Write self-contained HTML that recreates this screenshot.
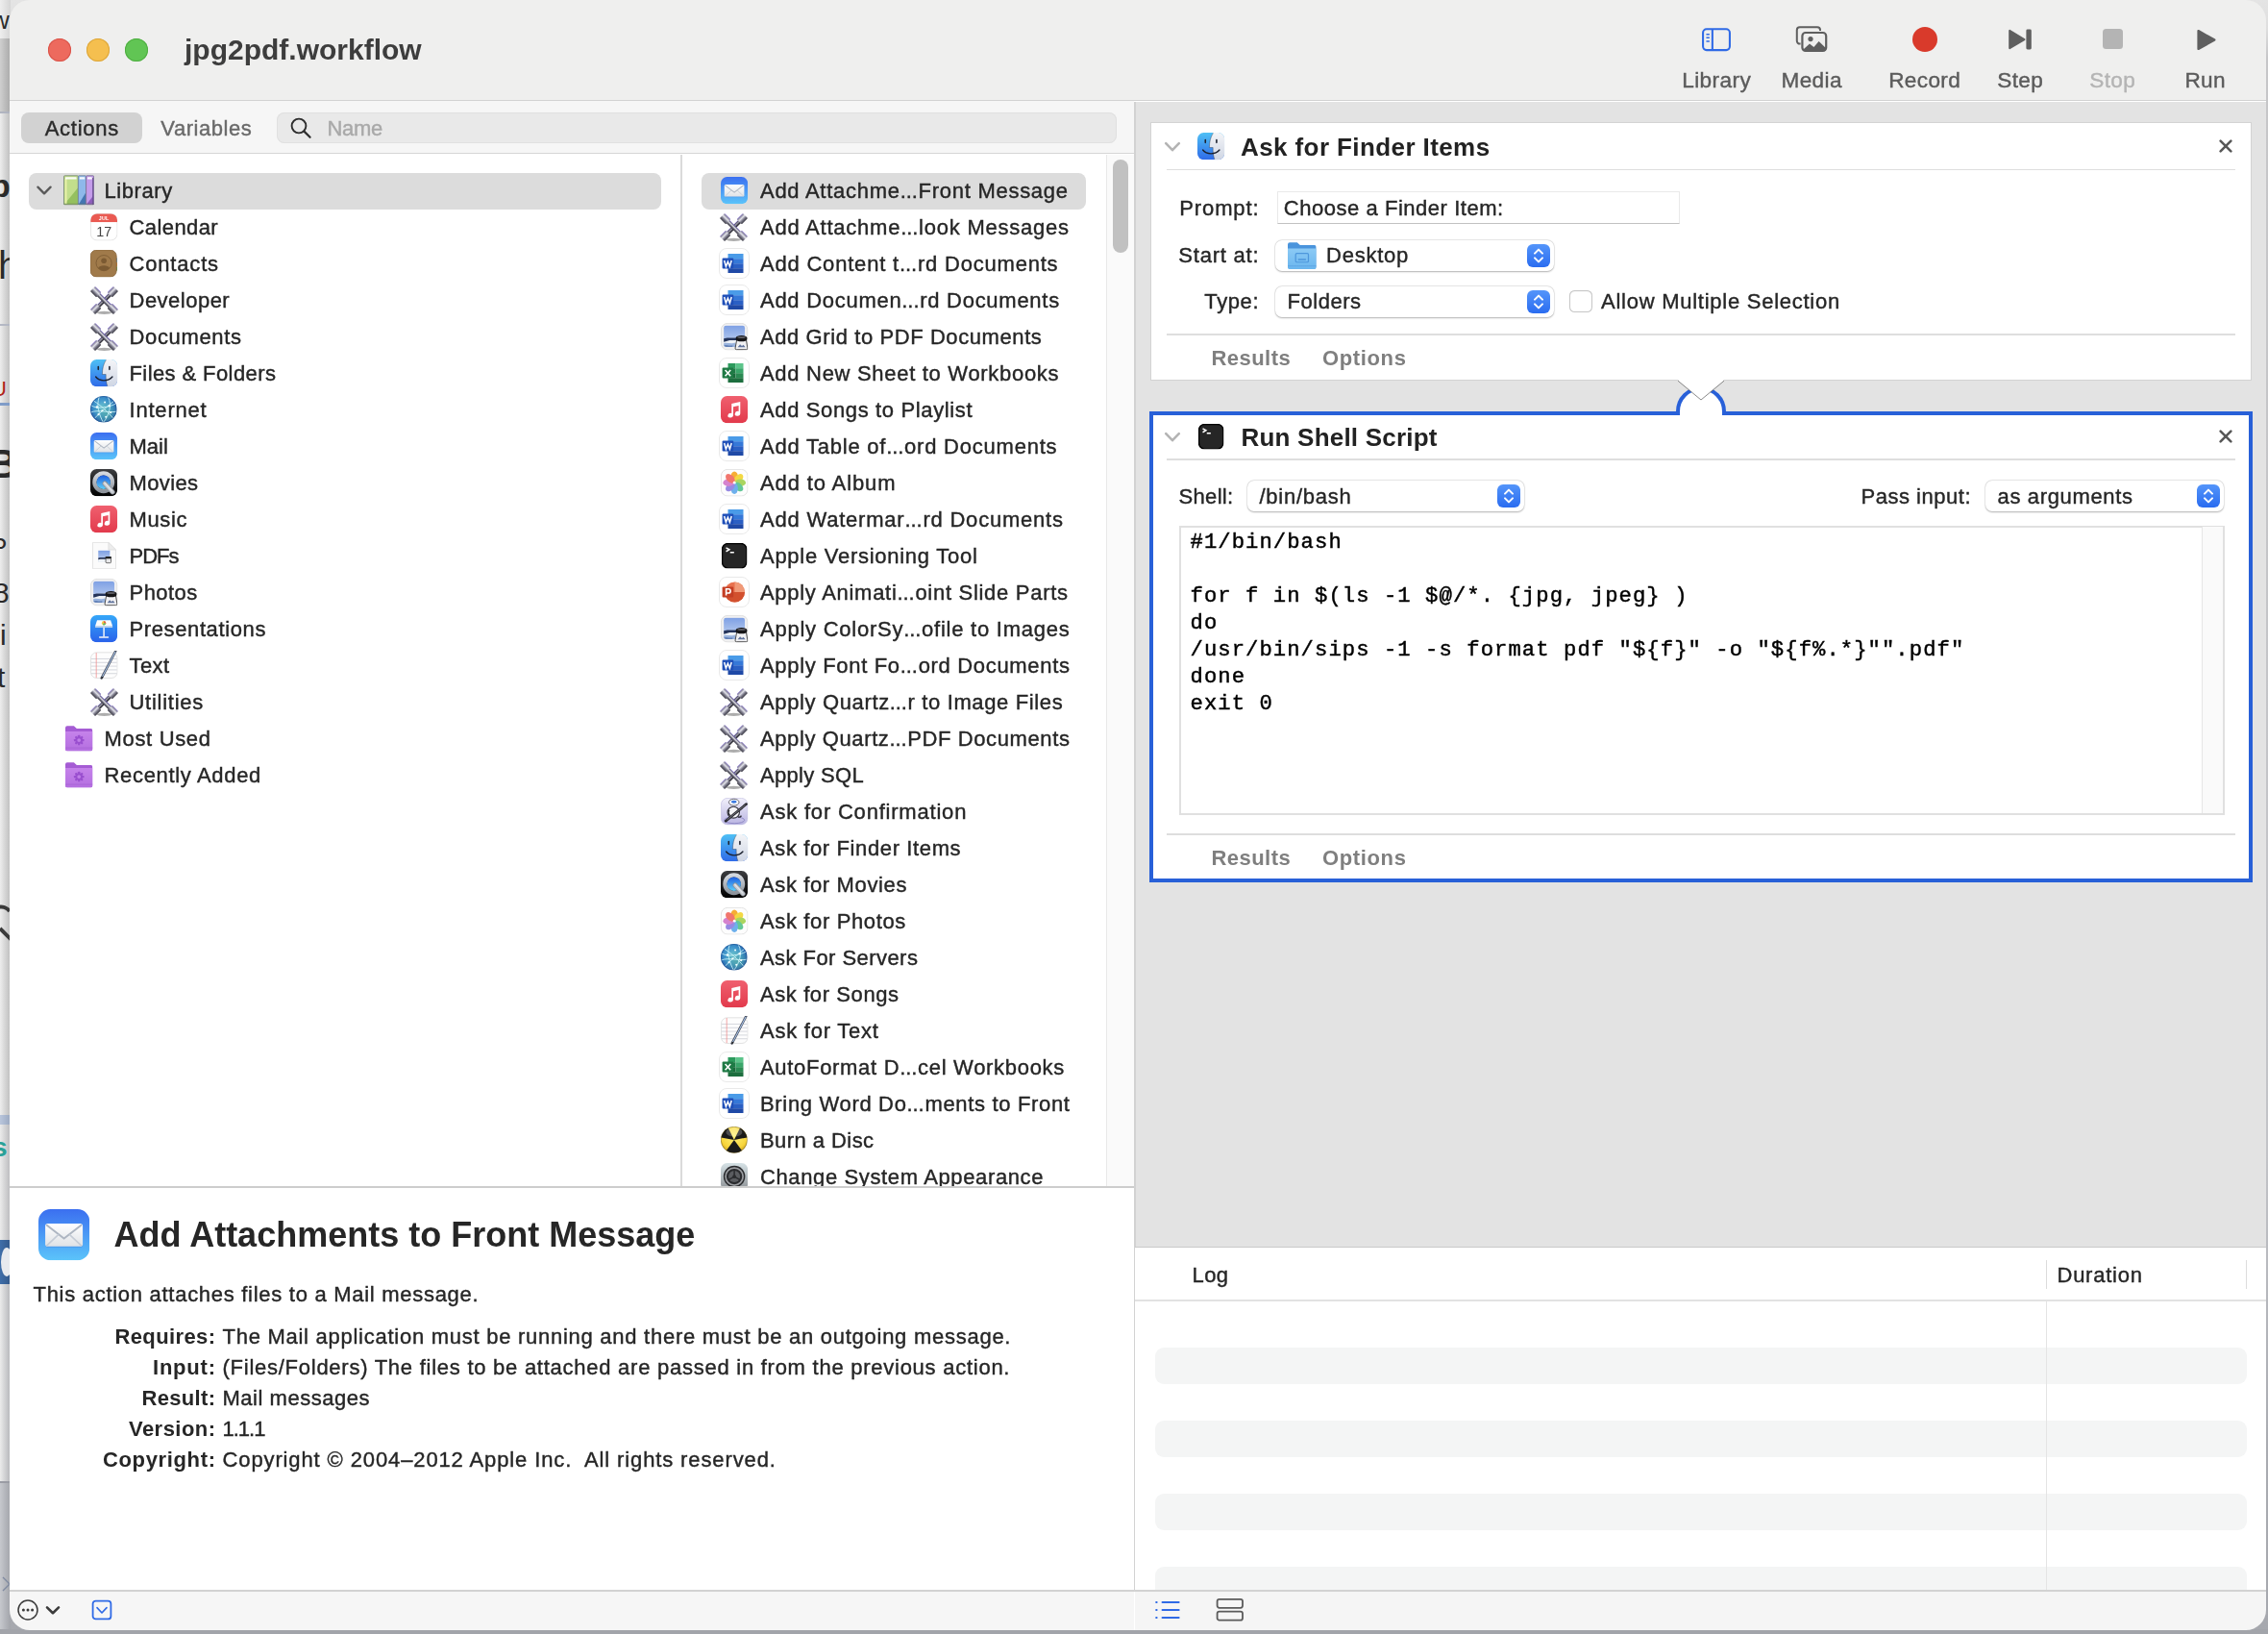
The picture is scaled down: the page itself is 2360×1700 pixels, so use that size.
<!DOCTYPE html>
<html><head><meta charset="utf-8"><title>Automator</title>
<style>
html,body{margin:0;padding:0}
body{width:2360px;height:1700px;overflow:hidden;position:relative;font-family:"Liberation Sans", sans-serif;background:#b9bbc0}
svg{overflow:visible}
</style></head><body>

<svg width="0" height="0" style="position:absolute">
<defs>
<linearGradient id="gMail" x1="0" y1="0" x2="0" y2="1"><stop offset="0" stop-color="#3b6ff0"/><stop offset="1" stop-color="#5bc4fa"/></linearGradient>
<linearGradient id="gMusic" x1="0" y1="0" x2="0" y2="1"><stop offset="0" stop-color="#f0606f"/><stop offset="1" stop-color="#e23a4c"/></linearGradient>
<linearGradient id="gFinderL" x1="0" y1="0" x2="0" y2="1"><stop offset="0" stop-color="#4fc0f5"/><stop offset="1" stop-color="#2f6be8"/></linearGradient>
<linearGradient id="gFinderR" x1="0" y1="0" x2="0" y2="1"><stop offset="0" stop-color="#f4f5f8"/><stop offset="1" stop-color="#cfd6e4"/></linearGradient>
<radialGradient id="gGlobe" cx="0.45" cy="0.42" r="0.62"><stop offset="0" stop-color="#6cc4d8"/><stop offset="0.55" stop-color="#3a8ec8"/><stop offset="1" stop-color="#1d4c9c"/></radialGradient>
<linearGradient id="gKey" x1="0" y1="0" x2="0" y2="1"><stop offset="0" stop-color="#35a7f9"/><stop offset="1" stop-color="#2a62ea"/></linearGradient>
<linearGradient id="gQT" x1="0" y1="0" x2="0" y2="1"><stop offset="0" stop-color="#3c3d40"/><stop offset="1" stop-color="#000"/></linearGradient>
<linearGradient id="gQTq" x1="0" y1="0" x2="0" y2="1"><stop offset="0" stop-color="#1e5fe0"/><stop offset="1" stop-color="#5fd0fa"/></linearGradient>
<linearGradient id="gFold" x1="0" y1="0" x2="0" y2="1"><stop offset="0" stop-color="#c582ea"/><stop offset="1" stop-color="#b46fe0"/></linearGradient>
<linearGradient id="gDesk" x1="0" y1="0" x2="0" y2="1"><stop offset="0" stop-color="#8ccaf5"/><stop offset="1" stop-color="#6ab6ee"/></linearGradient>
<linearGradient id="gSky" x1="0" y1="0" x2="0" y2="1"><stop offset="0" stop-color="#7d9fe4"/><stop offset="1" stop-color="#c9d8f2"/></linearGradient>
<linearGradient id="gTool" x1="0" y1="0" x2="1" y2="0"><stop offset="0" stop-color="#6d6c78"/><stop offset="0.5" stop-color="#e4e3ea"/><stop offset="1" stop-color="#6a6974"/></linearGradient>
<radialGradient id="gBurn" cx="0.5" cy="0.35" r="0.7"><stop offset="0" stop-color="#fff27a"/><stop offset="0.7" stop-color="#f7d43a"/><stop offset="1" stop-color="#b98a12"/></radialGradient>
<linearGradient id="gSys" x1="0" y1="0" x2="0" y2="1"><stop offset="0" stop-color="#d6e2e6"/><stop offset="1" stop-color="#8c9094"/></linearGradient>
<linearGradient id="gAuto" x1="0" y1="0" x2="0" y2="1"><stop offset="0" stop-color="#f1f0fb"/><stop offset="1" stop-color="#b9b4e2"/></linearGradient>
<linearGradient id="gStep" x1="0" y1="0" x2="0" y2="1"><stop offset="0" stop-color="#4a8bf8"/><stop offset="1" stop-color="#1f62e4"/></linearGradient>
<linearGradient id="gBkG" x1="0" y1="0" x2="1" y2="0"><stop offset="0" stop-color="#d9e9a2"/><stop offset="0.35" stop-color="#a4d06e"/><stop offset="1" stop-color="#6fae3e"/></linearGradient>
<linearGradient id="gBkB" x1="0" y1="0" x2="1" y2="0"><stop offset="0" stop-color="#9cc6ee"/><stop offset="0.5" stop-color="#5a98dc"/><stop offset="1" stop-color="#3d74b8"/></linearGradient>
<linearGradient id="gBkP" x1="0" y1="0" x2="1" y2="0"><stop offset="0" stop-color="#d4b0f2"/><stop offset="0.5" stop-color="#a874e0"/><stop offset="1" stop-color="#8450c0"/></linearGradient>

<linearGradient id="gRod" x1="0" y1="0" x2="0" y2="1"><stop offset="0" stop-color="#6250c0"/><stop offset="0.16" stop-color="#77758a"/><stop offset="0.42" stop-color="#e6e6ee"/><stop offset="0.7" stop-color="#6e6d7c"/><stop offset="1" stop-color="#34333d"/></linearGradient>
<linearGradient id="gRodD" x1="0" y1="0" x2="0" y2="1"><stop offset="0" stop-color="#6250c0"/><stop offset="0.18" stop-color="#626070"/><stop offset="0.42" stop-color="#a4a3b0"/><stop offset="0.72" stop-color="#403f4a"/><stop offset="1" stop-color="#25242c"/></linearGradient>
<linearGradient id="gSock" x1="0" y1="0" x2="0" y2="1"><stop offset="0" stop-color="#8472cc"/><stop offset="0.14" stop-color="#8e8c9e"/><stop offset="0.38" stop-color="#e4e4ec"/><stop offset="0.68" stop-color="#7c7b8a"/><stop offset="1" stop-color="#3c3b46"/></linearGradient>

<radialGradient id="gGlobeT" cx="0.62" cy="0.68" r="0.5"><stop offset="0" stop-color="#58b0a8" stop-opacity=".75"/><stop offset="1" stop-color="#58b0a8" stop-opacity="0"/></radialGradient>
<linearGradient id="gEnv" x1="0" y1="0" x2="0" y2="1"><stop offset="0" stop-color="#ffffff"/><stop offset="1" stop-color="#dfe2e6"/></linearGradient>
<linearGradient id="gQTr" x1="0" y1="0" x2="0" y2="1"><stop offset="0" stop-color="#d4d8de"/><stop offset="1" stop-color="#8e949c"/></linearGradient>
<symbol id="i-mail" viewBox="1 1 30 30">
 <rect x="1" y="1" width="30" height="30" rx="7" fill="url(#gMail)"/>
 <rect x="5.2" y="10.2" width="21.8" height="13.4" rx="1.4" fill="#3a6fd0" opacity=".25"/><rect x="5" y="9.5" width="22" height="13.4" rx="1.5" fill="url(#gEnv)"/>
 <path d="M5.6 10.2 L16 18.2 L26.4 10.2" fill="none" stroke="#aeb6c2" stroke-width="1.1"/>
 <path d="M5.6 22.6 L12.8 15.9 M26.4 22.6 L19.2 15.9" stroke="#c5ccd6" stroke-width="0.9" fill="none"/>
</symbol>

<symbol id="i-music" viewBox="1 1 30 30">
 <rect x="1" y="1" width="30" height="30" rx="7" fill="url(#gMusic)"/>
 <path d="M13 9.6 L22.6 7.4 V20.4 a3 2.5 -15 1 1 -1.8 -2.3 V11.6 L14.8 13 V22.4 a3 2.5 -15 1 1 -1.8 -2.3 Z" fill="#fff"/>
</symbol>

<symbol id="i-finder" viewBox="1 1 30 30">
 <clipPath id="cFinder"><rect x="1" y="1" width="30" height="30" rx="7"/></clipPath>
 <g clip-path="url(#cFinder)">
  <rect x="1" y="1" width="30" height="30" fill="url(#gFinderL)"/>
  <path d="M18.5 1 C15.5 6 14.3 11 14.2 17.5 H18.2 C18 22 18.6 27 20 31 H31 V1 Z" fill="url(#gFinderR)"/>
 </g>
 <path d="M9.8 9 V12 M22.2 9 V12" stroke="#1c2230" stroke-width="1.7" stroke-linecap="round"/>
 <path d="M7 20.2 C11 25.6 21 25.6 25.4 20.2" stroke="#1c2230" stroke-width="1.5" fill="none" stroke-linecap="round"/>
 <path d="M18.5 1.5 C15.5 6 14.3 11 14.2 17.5 H18.2 C18 22 18.6 27 20 30.5" stroke="#1c2230" stroke-width="0.7" fill="none" opacity=".55"/>
</symbol>

<symbol id="i-globe" viewBox="1 1 30 30">
 <circle cx="16" cy="16" r="15" fill="url(#gGlobe)"/>
 <circle cx="16" cy="16" r="15" fill="url(#gGlobeT)"/>
 <g fill="none" stroke="#d8fbff" stroke-width="0.95" opacity=".9">
  <path d="M2.4 12 C9 16 22 13.6 29.4 10"/><path d="M1.6 19.4 C10 16 22 20.4 30.2 18.6"/>
  <path d="M11 2 C7.6 12 11 22 15.4 30.6"/><path d="M21 2.2 C26 11 22 23 16 30.6"/>
  <path d="M5 6.6 C12 11 20 18 27 26.4"/><path d="M27.4 7 C21 12 12 20 6 26"/>
 </g>
 <g fill="#f2ffff"><circle cx="8.6" cy="13.4" r="1.35"/><circle cx="22.4" cy="12.2" r="1.35"/><circle cx="14.4" cy="17.6" r="1.2"/><circle cx="24" cy="19.6" r="1.25"/><circle cx="10.2" cy="21.8" r="1.1"/><circle cx="17.4" cy="8" r="1.1"/><circle cx="18.6" cy="24.6" r="1.1"/></g>
 <circle cx="16" cy="16" r="14.6" fill="none" stroke="#173f80" stroke-width="0.8" opacity=".55"/>
</symbol>

<symbol id="i-qt" viewBox="1 1 30 30">
 <rect x="1" y="1" width="30" height="30" rx="7" fill="url(#gQT)"/>
 <circle cx="15.6" cy="15.6" r="9.9" fill="none" stroke="url(#gQTr)" stroke-width="4.6"/>
 <circle cx="15.6" cy="15.6" r="7.7" fill="url(#gQTq)"/>
 <path d="M17 17 L25.6 26.4" stroke="#8f959d" stroke-width="5.4" stroke-linecap="round"/>
 <path d="M17 17 L25.6 26.4" stroke="#c9cdd3" stroke-width="3.6" stroke-linecap="round"/>
 <path d="M16.6 16 L25 25.2" stroke="#eef0f3" stroke-width="1.1" stroke-linecap="round" opacity=".8"/>
</symbol>

<symbol id="i-cal" viewBox="1.1 1.1 29.8 29.8">
 <clipPath id="cCal"><rect x="1.5" y="1.5" width="29" height="29" rx="7"/></clipPath>
 <rect x="1.5" y="1.5" width="29" height="29" rx="7" fill="#fff" stroke="#dcdcdc" stroke-width="0.8"/>
 <g clip-path="url(#cCal)"><rect x="1" y="1" width="30" height="9.6" fill="#ea5a52"/></g>
 <text x="16" y="8.6" font-family="Liberation Sans, sans-serif" font-size="5.6" font-weight="700" fill="#fff" text-anchor="middle" letter-spacing=".2">JUL</text>
 <text x="16" y="26" font-family="Liberation Sans, sans-serif" font-size="15" fill="#444" text-anchor="middle">17</text>
</symbol>

<symbol id="i-contacts" viewBox="1 1 30 30">
 <rect x="28" y="10" width="3" height="5" fill="#5aa9e6"/><rect x="28" y="15" width="3" height="4.5" fill="#e8913a"/><rect x="28" y="19.5" width="3" height="4.5" fill="#58b560"/>
 <rect x="1" y="1" width="29" height="30" rx="7" fill="#a07a4a"/>
 <rect x="1" y="1" width="29" height="30" rx="7" fill="none" stroke="#86633a" stroke-width="0.8"/>
 <circle cx="16" cy="15.5" r="8.6" fill="none" stroke="#7b5a32" stroke-width="0.9"/>
 <circle cx="16" cy="13" r="3" fill="#7b5a32"/>
 <path d="M9.6 21.2 C11 17.4 21 17.4 22.4 21.2 A8.6 8.6 0 0 1 9.6 21.2 Z" fill="#7b5a32"/>
</symbol>

<symbol id="i-tools" viewBox="0 0 32 32">
 <ellipse cx="16" cy="30.2" rx="8.6" ry="1.7" fill="#000" opacity=".32"/>
 <g transform="rotate(-45 16 16)">
  <rect x="-1" y="13.7" width="34" height="4.6" fill="url(#gRodD)"/>
  <rect x="-2.8" y="12" width="9.8" height="8" rx="0.9" fill="url(#gSock)"/>
  <rect x="25" y="12" width="9.8" height="8" rx="0.9" fill="url(#gSock)"/>
 </g>
 <g transform="rotate(45 16 16)">
  <rect x="-1" y="13.6" width="34" height="4.8" fill="url(#gRod)"/>
  <rect x="-2.8" y="12" width="9.8" height="8" rx="0.9" fill="url(#gSock)"/>
  <rect x="25" y="12" width="9.8" height="8" rx="0.9" fill="url(#gSock)"/>
 </g>
</symbol>

<symbol id="i-pdf" viewBox="3.2 1.6 25.6 28.8">
 <path d="M3.6 2 H20.5 L28.4 9.8 V30 H3.6 Z" fill="#fbfbfb" stroke="#dcdcdc" stroke-width="0.8"/>
 <path d="M20.5 2 V9.8 H28.4 Z" fill="#ededed" stroke="#dcdcdc" stroke-width="0.8"/>
 <rect x="9.6" y="10.6" width="12.4" height="12.4" fill="url(#gSky)"/>
 <path d="M9.6 19 C12 17.5 17 18.5 22 17.4 V23 H9.6 Z" fill="#eef2f6"/>
 <path d="M9.6 18.6 C12 17.2 16 18.6 22 17.4 V19.6 C17 20.4 14 19.2 9.6 20.4 Z" fill="#2c3a5c"/>
 <rect x="17.6" y="18.6" width="5.6" height="5.2" rx="1" fill="#e8e8ea" stroke="#333" stroke-width="0.7"/>
 <rect x="17" y="17" width="6.8" height="2.2" rx="1.1" fill="#222"/>
</symbol>

<symbol id="i-preview" viewBox="1.1 1.1 29.8 29.8">
 <rect x="1.5" y="1.5" width="29" height="29" rx="7" fill="#f0f0f1" stroke="#d8d8d8" stroke-width="0.8"/>
 <clipPath id="cPv"><rect x="4.4" y="4" width="23" height="23.4" rx="2.6"/></clipPath>
 <g clip-path="url(#cPv)">
  <rect x="4" y="3.6" width="24" height="24" fill="url(#gSky)"/>
  <path d="M4 19 C10 16.4 18 18.6 28 16.4 V28 H4 Z" fill="#eef2f7"/>
  <path d="M4 18.2 C9 16 16 18.8 28 16.2 V19.4 C20 21 13 19.2 9 20.4 C7 21 5.5 21.4 4 22 Z" fill="#24345a"/>
  <path d="M4 23.4 C8 21.6 12 24.6 17 22.6 L18 28 H4 Z" fill="#7d9fd6" opacity=".75"/>
  <path d="M4 25.6 C8 24.6 10 26.6 14 25.6 V28 H4 Z" fill="#4f6da8" opacity=".7"/>
 </g>
 <path d="M18.6 19.4 H28.8 L30.4 28.6 a1.5 1.5 0 0 1 -1.5 1.6 H18.4 a1.5 1.5 0 0 1 -1.5 -1.6 Z" fill="#f1f1f3" stroke="#333" stroke-width="0.9"/>
 <path d="M17.6 17.4 a6.1 2.6 0 0 1 12.2 0 v1.6 a6.1 2.4 0 0 1 -12.2 0 Z" fill="#161618"/>
 <ellipse cx="23.7" cy="16.9" rx="4.6" ry="1.1" fill="#5c5c62"/>
 <path d="M19.6 27.6 L22.2 24.4 L24.2 26.4 L25.8 25 L28 27.6 Z" fill="#60739c"/>
</symbol>

<symbol id="i-keynote" viewBox="1 1 30 30">
 <rect x="1" y="1" width="30" height="30" rx="7" fill="url(#gKey)"/>
 <path d="M8.5 6.5 H23.5 L25.6 13 H6.4 Z" fill="#fafbfc"/>
 <rect x="6.4" y="13" width="19.2" height="1.6" fill="#dfe5ee"/>
 <rect x="15.2" y="14.6" width="1.6" height="10.4" fill="#f3f5f8"/>
 <rect x="10.5" y="24.6" width="11" height="1.7" rx=".8" fill="#f3f5f8"/>
 <circle cx="16" cy="9.8" r="2.3" fill="#f2c744"/>
 <path d="M16 9.8 L16 7.5 A2.3 2.3 0 0 1 18.2 10.4 Z" fill="#e45a4c"/>
 <path d="M16 9.8 L18.2 10.4 A2.3 2.3 0 0 1 14.6 11.6 Z" fill="#58b868"/>
</symbol>

<symbol id="i-textedit" viewBox="1 0.6 30 31.2">
 <rect x="1.5" y="2.5" width="29" height="28" rx="6.5" fill="#fdfdfd" stroke="#d9d9d9" stroke-width="0.8"/>
 <g stroke="#c9ccd4" stroke-width="0.8"><path d="M2 9.5 H30"/><path d="M2 13.5 H30"/><path d="M2 17.5 H30"/><path d="M2 21.5 H30"/><path d="M2 25.5 H30"/></g>
 <path d="M7.5 2.8 V30.2" stroke="#f08c8c" stroke-width="0.8"/>
 <path d="M28.6 1 L13.2 30.6" stroke="#4a4f5c" stroke-width="2.6" stroke-linecap="round"/>
 <path d="M28.2 2 L14.2 28.8" stroke="#a8c4ea" stroke-width="1.1" stroke-linecap="round"/>
 <path d="M13.9 28.6 L12.4 31.6 L15.2 29.6 Z" fill="#222"/>
</symbol>

<symbol id="i-pfolder" viewBox="1.5 2.6 29 27">
 <path d="M1.5 4.8 a2 2 0 0 1 2 -2 H10.6 l3 2.8 H28.5 a2 2 0 0 1 2 2 V27.4 a2 2 0 0 1 -2 2 H3.5 a2 2 0 0 1 -2 -2 Z" fill="#a55cd4"/>
 <path d="M1.5 8.8 H30.5 V27.6 a2 2 0 0 1 -2 2 H3.5 a2 2 0 0 1 -2 -2 Z" fill="url(#gFold)"/>
 <path d="M1.5 26.2 H30.5" stroke="#a65fd2" stroke-width="0.8"/>
 <g transform="translate(16 18)" fill="#9a4fcf">
  <g id="gearT"><rect x="-1.1" y="-5.4" width="2.2" height="10.8" rx=".5"/></g>
  <use href="#gearT" transform="rotate(45)"/><use href="#gearT" transform="rotate(90)"/><use href="#gearT" transform="rotate(135)"/>
  <circle r="3.8"/><circle r="1.9" fill="#c07ee8"/>
 </g>
</symbol>

<symbol id="i-desktop" viewBox="1.5 2.2 29 27.4">
 <path d="M1.5 4.4 a2 2 0 0 1 2 -2 H11 l3 2.8 H28.5 a2 2 0 0 1 2 2 V27.4 a2 2 0 0 1 -2 2 H3.5 a2 2 0 0 1 -2 -2 Z" fill="#4a94dc"/>
 <path d="M1.5 8.6 H30.5 V27.6 a2 2 0 0 1 -2 2 H3.5 a2 2 0 0 1 -2 -2 Z" fill="url(#gDesk)"/>
 <path d="M1.5 26.4 H30.5" stroke="#5aa2e2" stroke-width="0.8"/>
 <rect x="9.5" y="13.5" width="13" height="9" rx="1.2" fill="none" stroke="#4d97dc" stroke-width="1.2"/>
 <rect x="12" y="19" width="8" height="1.6" rx=".4" fill="#4d97dc"/>
</symbol>

<symbol id="i-word" viewBox="0 0 32 32">
 <rect x="0.5" y="0.5" width="31" height="31" rx="7.5" fill="#fff" stroke="#e6e6e6" stroke-width="0.9"/>
 <rect x="9.5" y="6" width="16" height="5.2" fill="#4a9be8"/>
 <rect x="9.5" y="11.2" width="16" height="5" fill="#3578d8"/>
 <rect x="9.5" y="16.2" width="16" height="5" fill="#2a5fc4"/>
 <rect x="9.5" y="21.2" width="16" height="4.8" fill="#1f49a6"/>
 <rect x="3.6" y="10.4" width="11.6" height="11.2" rx="1" fill="#1f4fb8"/>
 <path d="M5.6 13 L7.4 19.2 L9.4 14.2 L11.4 19.2 L13.2 13" fill="none" stroke="#fff" stroke-width="1.5" stroke-linejoin="miter"/>
</symbol>

<symbol id="i-excel" viewBox="0 0 32 32">
 <rect x="0.5" y="0.5" width="31" height="31" rx="7.5" fill="#fff" stroke="#e6e6e6" stroke-width="0.9"/>
 <rect x="9.5" y="6" width="8" height="5.2" fill="#2c9a5c"/><rect x="17.5" y="6" width="8" height="5.2" fill="#5cc48a"/>
 <rect x="9.5" y="11.2" width="8" height="5" fill="#1f7a45"/><rect x="17.5" y="11.2" width="8" height="5" fill="#3aa66a"/>
 <rect x="9.5" y="16.2" width="8" height="5" fill="#1a6a3a"/><rect x="17.5" y="16.2" width="8" height="5" fill="#2a8a52"/>
 <rect x="9.5" y="21.2" width="16" height="4.8" fill="#1d6e3e"/>
 <rect x="3.6" y="10.4" width="11.6" height="11.2" rx="1" fill="#1f7a45"/>
 <path d="M6.6 13 L12.2 19.2 M12.2 13 L6.6 19.2" stroke="#fff" stroke-width="1.6"/>
</symbol>

<symbol id="i-ppt" viewBox="0 0 32 32">
 <rect x="0.5" y="0.5" width="31" height="31" rx="7.5" fill="#fff" stroke="#e6e6e6" stroke-width="0.9"/>
 <circle cx="16.5" cy="16" r="10.5" fill="#e8714e"/>
 <path d="M16.5 5.5 A10.5 10.5 0 0 1 27 16 H16.5 Z" fill="#f09a78"/>
 <path d="M6 16 H27 A10.5 10.5 0 0 1 6 16 Z" fill="#d2502e"/>
 <rect x="3.6" y="10.4" width="11.6" height="11.2" rx="1" fill="#c43e24"/>
 <path d="M7.6 19.4 V12.8 H10 a2.1 2.1 0 0 1 0 4.2 H7.6" fill="none" stroke="#fff" stroke-width="1.6"/>
</symbol>

<symbol id="i-photos" viewBox="1.1 1.1 29.8 29.8">
 <rect x="1.5" y="1.5" width="29" height="29" rx="7" fill="#fdfdfd" stroke="#dedede" stroke-width="0.9"/>
 <g transform="translate(16 16)" opacity=".88">
  <ellipse cx="0" cy="-6.4" rx="3.9" ry="6" fill="#f6a21a"/>
  <ellipse cx="0" cy="-6.4" rx="3.9" ry="6" fill="#f2d32a" transform="rotate(45)"/>
  <ellipse cx="0" cy="-6.4" rx="3.9" ry="6" fill="#9fd04a" transform="rotate(90)"/>
  <ellipse cx="0" cy="-6.4" rx="3.9" ry="6" fill="#4fc08a" transform="rotate(135)"/>
  <ellipse cx="0" cy="-6.4" rx="3.9" ry="6" fill="#5aa6ea" transform="rotate(180)"/>
  <ellipse cx="0" cy="-6.4" rx="3.9" ry="6" fill="#8a7ae0" transform="rotate(225)"/>
  <ellipse cx="0" cy="-6.4" rx="3.9" ry="6" fill="#d072c8" transform="rotate(270)"/>
  <ellipse cx="0" cy="-6.4" rx="3.9" ry="6" fill="#f0645a" transform="rotate(315)"/>
 </g>
 <circle cx="16" cy="16" r="1.5" fill="#fff"/>
</symbol>

<symbol id="i-term" viewBox="1.1 1.1 29.8 29.8">
 <rect x="1.7" y="1.7" width="28.6" height="28.6" rx="6.5" fill="#262626" stroke="#000" stroke-width="1.6"/>
 <path d="M6.2 6.6 L10 8.8 L6.2 11" fill="none" stroke="#fff" stroke-width="1.7"/>
 <path d="M11 12.2 H15.6" stroke="#fff" stroke-width="1.6"/>
</symbol>

<symbol id="i-auto" viewBox="1.1 1.1 29.8 29.8">
 <rect x="1.5" y="1.5" width="29" height="29" rx="7" fill="url(#gAuto)" stroke="#c9c6e6" stroke-width="0.8"/>
 <ellipse cx="16" cy="25.5" rx="11" ry="3.6" fill="none" stroke="#8d88c4" stroke-width="1"/>
 <ellipse cx="15" cy="17" rx="6.5" ry="6.2" fill="#f4f4f8" stroke="#3a3a44" stroke-width="1.2"/>
 <ellipse cx="15.5" cy="6" rx="5.6" ry="3.6" fill="#fafafc" stroke="#55555f" stroke-width="0.9"/>
 <ellipse cx="15.5" cy="5.6" rx="3" ry="1.5" fill="#3c7ae0"/>
 <path d="M6.5 26.5 L29 8" stroke="#26262c" stroke-width="2.8" stroke-linecap="round"/>
 <path d="M8 25.2 L28 8.8" stroke="#8c8c98" stroke-width="0.8"/>
 <path d="M10.5 14.5 a4 4 0 0 0 1 6" fill="none" stroke="#26262c" stroke-width="1.4"/>
 <path d="M20 22 a3 3 0 0 0 3.6 -1.4" fill="none" stroke="#26262c" stroke-width="1.4"/>
</symbol>

<symbol id="i-burn" viewBox="1.2 1.2 29.6 29.6">
 <circle cx="16" cy="16" r="14.6" fill="url(#gBurn)"/>
 <g fill="#1a1a1a">
  <path d="M16 16 L1.6 13.4 A14.6 14.6 0 0 1 9.5 2.9 Z"/>
  <path d="M16 16 L22.5 2.9 A14.6 14.6 0 0 1 30.4 13.4 Z"/>
  <path d="M16 16 L24.6 27.8 A14.6 14.6 0 0 1 7.4 27.8 Z"/>
 </g>
 <ellipse cx="16" cy="7.5" rx="9" ry="5" fill="#fff" opacity=".22"/>
 <circle cx="16" cy="16" r="14.6" fill="none" stroke="#4a3a08" stroke-width="0.7" opacity=".6"/>
</symbol>

<symbol id="i-sys" viewBox="1 1 30 30">
 <rect x="1" y="1" width="30" height="30" rx="7" fill="url(#gSys)"/>
 <circle cx="16" cy="16" r="12" fill="#2a2b2e"/>
 <circle cx="16" cy="16" r="9.6" fill="none" stroke="#9a9ca0" stroke-width="1.8"/>
 <circle cx="16" cy="16" r="6.4" fill="#5a5c60"/>
 <g stroke="#2a2b2e" stroke-width="1.6"><path d="M16 16 L16 8"/><path d="M16 16 L23 20"/><path d="M16 16 L9 20"/></g>
 <circle cx="16" cy="16" r="2" fill="#2a2b2e"/>
</symbol>

<symbol id="i-library" viewBox="0 0 32 31.6">
 <rect x="0.5" y="0.8" width="14.9" height="30.2" rx="0.8" fill="#c2de8c" stroke="#7d8d76" stroke-width="0.9"/>
 <path d="M1 30.6 L15 13.5 V30.6 Z" fill="#8ab854" opacity=".8"/>
 <rect x="1.6" y="4" width="2" height="26" fill="#e9f2aa" opacity=".9"/>
 <rect x="2" y="2.3" width="11.6" height="2.2" rx=".6" fill="#fff" opacity=".92"/>
 <rect x="15.4" y="0.8" width="8.2" height="30.2" rx="0.8" fill="#8eb8ea" stroke="#74879f" stroke-width="0.9"/>
 <path d="M15.9 30.6 L23.2 18.5 V30.6 Z" fill="#3c6fac" opacity=".9"/>
 <rect x="16.8" y="2.3" width="5.4" height="2.2" rx=".6" fill="#fff" opacity=".92"/>
 <rect x="23.6" y="0.8" width="8" height="30.2" rx="0.8" fill="#c49cea" stroke="#7d7394" stroke-width="0.9"/>
 <path d="M24.1 30.6 L31.2 21.5 V30.6 Z" fill="#8a58b8" opacity=".9"/>
 <rect x="30" y="3" width="1.3" height="27.8" fill="#6a5092" opacity=".85"/>
 <rect x="25" y="2.3" width="4.8" height="2.2" rx=".6" fill="#fff" opacity=".92"/>
 <rect x="0.5" y="29.6" width="31.1" height="1.4" fill="#5d6b5a" opacity=".35"/>
</symbol>
</defs>
</svg>

<div id="desk" style="position:absolute;left:0;top:0;width:2360px;height:1700px;background:linear-gradient(180deg,#e4e4e4 0px,#dedede 30px,#c6c6c8 60px,#c2c3c7 1200px,#a9abb1 1500px,#a6a8ae 1700px)"></div><div style="position:absolute;left:0px;top:0px;width:11px;height:40px;background:linear-gradient(90deg,#eeeeee 0%,#d6d6d6 100%)"></div><div style="position:absolute;left:0px;top:40px;width:11px;height:76px;background:linear-gradient(90deg,#cfcfcf 0%,#a9a9a9 100%)"></div><div style="position:absolute;left:0px;top:116px;width:11px;height:1044px;background:linear-gradient(90deg,#ededed 0%,#bcbcbc 100%)"></div><div style="position:absolute;left:0px;top:1160px;width:11px;height:10px;background:linear-gradient(90deg,#b9c6dc 0%,#9aa8c0 100%)"></div><div style="position:absolute;left:0px;top:1170px;width:11px;height:120px;background:linear-gradient(90deg,#ebebeb 0%,#b9b9bc 100%)"></div><div style="position:absolute;left:0px;top:1290px;width:11px;height:46px;background:linear-gradient(90deg,#3f6ea9 0%,#34598a 100%)"></div><div style="position:absolute;left:1px;top:1298px;width:12px;height:30px;border-radius:50%;background:#e8eaee"></div><div style="position:absolute;left:0px;top:1336px;width:11px;height:206px;background:linear-gradient(90deg,#ebebeb 0%,#b4b5b9 100%)"></div><div style="position:absolute;left:0px;top:1542px;width:11px;height:158px;background:linear-gradient(90deg,#c6c8cd 0%,#a2a4aa 100%)"></div><div style="position:absolute;left:0px;top:116px;width:11px;height:2px;background:#b0b4c0"></div><div style="position:absolute;left:0px;top:337px;width:11px;height:1.5px;background:#b4b8c4"></div><div style="position:absolute;left:0px;top:419px;width:11px;height:3px;background:#7f9cc8"></div><div style="position:absolute;left:0px;top:1541px;width:11px;height:1.5px;background:#9a9ca4"></div><div style="position:absolute;left:0;top:0;width:10px;height:1700px;overflow:hidden"><div style="position:absolute;left:-9px;top:8px;font-size:26px;font-weight:400;color:#2a2a2a;line-height:1;white-space:pre">w</div><div style="position:absolute;left:-10px;top:176px;font-size:34px;font-weight:700;color:#2a2a2a;line-height:1;white-space:pre">pi</div><div style="position:absolute;left:-2px;top:256px;font-size:40px;font-weight:400;color:#2a2a2a;line-height:1;white-space:pre">h</div><div style="position:absolute;left:-9px;top:394px;font-size:22px;font-weight:400;color:#b02418;line-height:1;white-space:pre">U</div><div style="position:absolute;left:-12px;top:462px;font-size:42px;font-weight:700;color:#2a2a2a;line-height:1;white-space:pre">B</div><div style="position:absolute;left:-10px;top:556px;font-size:26px;font-weight:400;color:#2a2a2a;line-height:1;white-space:pre">P</div><div style="position:absolute;left:-7px;top:602px;font-size:30px;font-weight:400;color:#2a2a2a;line-height:1;white-space:pre">8</div><div style="position:absolute;left:0px;top:646px;font-size:30px;font-weight:400;color:#2a2a2a;line-height:1;white-space:pre">i</div><div style="position:absolute;left:-3px;top:690px;font-size:30px;font-weight:400;color:#2a2a2a;line-height:1;white-space:pre">t</div><div style="position:absolute;left:-8px;top:1180px;font-size:28px;font-weight:700;color:#2aa198;line-height:1;white-space:pre">s</div><svg style="position:absolute;left:-16px;top:932px" width="30" height="60" viewBox="0 0 30 60"><path d="M14 12 a11 11 0 0 1 12 4 M16 34 L30 48" fill="none" stroke="#3a3a3a" stroke-width="4"/></svg><svg style="position:absolute;left:2px;top:1640px" width="10" height="16" viewBox="0 0 10 16"><path d="M1 1 L8 8 L1 15" fill="none" stroke="#7f8aa0" stroke-width="1.4"/></svg></div><div style="position:absolute;left:0px;top:1695px;width:2360px;height:5px;background:#a2a4aa"></div><div id="win" style="position:absolute;left:0;top:0;width:2360px;height:1700px;clip-path:inset(0px 2px 4px 10px round 21px);background:#fff;will-change:transform"><div style="position:absolute;left:0px;top:0px;width:2360px;height:104px;background:#efefee"></div><div style="position:absolute;left:0px;top:103.6px;width:2360px;height:1.3px;background:#d2d2d2"></div><div style="position:absolute;left:50px;top:40px;width:24px;height:24px;border-radius:50%;background:#ed6a5e;box-shadow:inset 0 0 0 1px #d9544a"></div><div style="position:absolute;left:90px;top:40px;width:24px;height:24px;border-radius:50%;background:#f5bf4f;box-shadow:inset 0 0 0 1px #dca63a"></div><div style="position:absolute;left:130px;top:40px;width:24px;height:24px;border-radius:50%;background:#61c554;box-shadow:inset 0 0 0 1px #4fae42"></div><div style="position:absolute;top:30px;height:44px;line-height:44px;font-size:30px;font-weight:700;color:#3d3d3d;letter-spacing:0px;white-space:pre;left:192px;">jpg2pdf.workflow</div><div style="position:absolute;top:66px;height:36px;line-height:36px;font-size:22.6px;font-weight:400;color:#5b5b5b;letter-spacing:0.423px;white-space:pre;-webkit-text-stroke:0.4px #5b5b5b;left:1486.2115px;width:600px;text-align:center;">Library</div><div style="position:absolute;top:66px;height:36px;line-height:36px;font-size:22.6px;font-weight:400;color:#5b5b5b;letter-spacing:0.35px;white-space:pre;-webkit-text-stroke:0.4px #5b5b5b;left:1585.175px;width:600px;text-align:center;">Media</div><div style="position:absolute;top:66px;height:36px;line-height:36px;font-size:22.6px;font-weight:400;color:#5b5b5b;letter-spacing:0.35px;white-space:pre;-webkit-text-stroke:0.4px #5b5b5b;left:1702.675px;width:600px;text-align:center;">Record</div><div style="position:absolute;top:66px;height:36px;line-height:36px;font-size:22.6px;font-weight:400;color:#5b5b5b;letter-spacing:0.35px;white-space:pre;-webkit-text-stroke:0.4px #5b5b5b;left:1802.1750000000002px;width:600px;text-align:center;">Step</div><div style="position:absolute;top:66px;height:36px;line-height:36px;font-size:22.6px;font-weight:400;color:#b4b4b4;letter-spacing:0.35px;white-space:pre;-webkit-text-stroke:0.4px #b4b4b4;left:1898.1750000000002px;width:600px;text-align:center;">Stop</div><div style="position:absolute;top:66px;height:36px;line-height:36px;font-size:22.6px;font-weight:400;color:#5b5b5b;letter-spacing:0.35px;white-space:pre;-webkit-text-stroke:0.4px #5b5b5b;left:1994.6750000000002px;width:600px;text-align:center;">Run</div><svg style="position:absolute;left:1770px;top:27.8px" width="32" height="26.4" viewBox="0 0 34 28"><rect x="2.2" y="2.4" width="29.6" height="23.2" rx="4" fill="none" stroke="#2f6ae6" stroke-width="2.2"/><path d="M12.6 2.4 V25.6" stroke="#2f6ae6" stroke-width="2.2"/><path d="M5.8 8.2 H9.4 M5.8 12 H9.4 M5.8 15.8 H9.4" stroke="#2f6ae6" stroke-width="1.6"/></svg><svg style="position:absolute;left:1868px;top:26px" width="34" height="30" viewBox="0 0 34 30"><path d="M5.6 19.6 H4.8 a3 3 0 0 1 -3 -3 V5.2 a3 3 0 0 1 3 -3 H23 a3 3 0 0 1 3 3 V6" fill="none" stroke="#5f5f5f" stroke-width="2"/><rect x="7.4" y="8" width="24.8" height="19" rx="3.4" fill="none" stroke="#5f5f5f" stroke-width="2.2"/><circle cx="16" cy="14.6" r="2.6" fill="#5f5f5f"/><path d="M8.4 25.6 L15 19.4 L19.4 23 L24.6 17 L31.4 23.4 V25.4 a1.6 1.6 0 0 1 -1.6 1.6 H9.6 Z" fill="#5f5f5f"/></svg><div style="position:absolute;left:1989.5px;top:28px;width:26px;height:26px;border-radius:50%;background:#d93a2b"></div><svg style="position:absolute;left:2089px;top:30px" width="26" height="22" viewBox="0 0 26 22"><path d="M1.2 1.8 a1 1 0 0 1 1.5 -0.9 L18 10.2 a1 1 0 0 1 0 1.7 L2.7 21 a1 1 0 0 1 -1.5 -0.9 Z" fill="#5f5f5f"/><rect x="19.4" y="0.6" width="5.4" height="20.8" rx="1.4" fill="#5f5f5f"/></svg><div style="position:absolute;left:2187.5px;top:29.9px;width:21px;height:21px;border-radius:3.5px;background:#b4b4b4"></div><svg style="position:absolute;left:2284.5px;top:29.5px" width="22" height="23" viewBox="0 0 22 23"><path d="M1.4 2 a1.1 1.1 0 0 1 1.7 -0.9 L20 10.6 a1.1 1.1 0 0 1 0 1.9 L3.1 21.9 a1.1 1.1 0 0 1 -1.7 -0.9 Z" fill="#5f5f5f"/></svg><div style="position:absolute;left:0px;top:104.9px;width:1180px;height:54px;background:#f6f6f6"></div><div style="position:absolute;left:0px;top:158.6px;width:1180px;height:1.4px;background:#d6d6d6"></div><div style="position:absolute;left:22px;top:117px;width:126px;height:32px;border-radius:8px;background:#d2d2d2"></div><div style="position:absolute;top:117.7px;height:32px;line-height:32px;font-size:22px;font-weight:400;color:#2b2b2b;letter-spacing:0.757px;white-space:pre;-webkit-text-stroke:0.4px #2b2b2b;left:-214.6215px;width:600px;text-align:center;">Actions</div><div style="position:absolute;top:117.7px;height:32px;line-height:32px;font-size:22px;font-weight:400;color:#6a6a6a;letter-spacing:0.538px;white-space:pre;-webkit-text-stroke:0.4px #6a6a6a;left:-85.231px;width:600px;text-align:center;">Variables</div><div style="position:absolute;left:288px;top:117px;width:874px;height:32px;border-radius:8px;background:#e9e9e9;box-shadow:inset 0 0 0 1px #e0e0e0"></div><svg style="position:absolute;left:301px;top:121px" width="24" height="24" viewBox="0 0 24 24"><circle cx="10" cy="10" r="7.4" fill="none" stroke="#2e2e2e" stroke-width="1.9"/><path d="M15.4 15.6 L21.6 21.8" stroke="#2e2e2e" stroke-width="2.2" stroke-linecap="round"/></svg><div style="position:absolute;top:117.7px;height:32px;line-height:32px;font-size:22px;font-weight:400;color:#a9a9a9;letter-spacing:-0.296px;white-space:pre;-webkit-text-stroke:0.4px #a9a9a9;left:340.5px;">Name</div><div style="position:absolute;left:0px;top:160px;width:1180px;height:1075.5px;background:#fff"></div><div style="position:absolute;left:708px;top:160.5px;width:1.6px;height:1075px;background:#dadada"></div><div style="position:absolute;left:1150.5px;top:160.5px;width:29.5px;height:1075px;background:#fafafa;border-left:1px solid #e8e8e8;box-sizing:border-box"></div><div style="position:absolute;left:1158px;top:166px;width:16px;height:97px;border-radius:8px;background:#c1c1c1"></div><div style="position:absolute;left:1180px;top:105.5px;width:2px;height:1550px;background:#d2d2d2"></div><div style="position:absolute;left:30px;top:180px;width:658px;height:38px;border-radius:8px;background:#dcdcdc"></div><svg style="position:absolute;left:36px;top:190px" width="20" height="16" viewBox="0 0 20 16"><path d="M3.4 4.6 L10 11.4 L16.6 4.6" fill="none" stroke="#5a5a5a" stroke-width="2.3" stroke-linecap="round" stroke-linejoin="round"/></svg><svg style="position:absolute;left:66.00px;top:182.00px" width="32.00" height="31.60"><use href="#i-library"/></svg><div style="position:absolute;top:179.5px;height:38px;line-height:38px;font-size:22px;font-weight:400;color:#262626;letter-spacing:0.575px;white-space:pre;-webkit-text-stroke:0.4px #262626;left:108.5px;">Library</div><svg style="position:absolute;left:93.80px;top:221.80px" width="28.40" height="28.40"><use href="#i-cal"/></svg><div style="position:absolute;top:217.5px;height:38px;line-height:38px;font-size:22px;font-weight:400;color:#262626;letter-spacing:0.417px;white-space:pre;-webkit-text-stroke:0.4px #262626;left:134.5px;">Calendar</div><svg style="position:absolute;left:93.90px;top:259.90px" width="28.20" height="28.20"><use href="#i-contacts"/></svg><div style="position:absolute;top:255.5px;height:38px;line-height:38px;font-size:22px;font-weight:400;color:#262626;letter-spacing:0.825px;white-space:pre;-webkit-text-stroke:0.4px #262626;left:134.5px;">Contacts</div><svg style="position:absolute;left:93.50px;top:297.50px" width="29.00" height="29.00"><use href="#i-tools"/></svg><div style="position:absolute;top:293.5px;height:38px;line-height:38px;font-size:22px;font-weight:400;color:#262626;letter-spacing:0.49px;white-space:pre;-webkit-text-stroke:0.4px #262626;left:134.5px;">Developer</div><svg style="position:absolute;left:93.50px;top:335.50px" width="29.00" height="29.00"><use href="#i-tools"/></svg><div style="position:absolute;top:331.5px;height:38px;line-height:38px;font-size:22px;font-weight:400;color:#262626;letter-spacing:0.64px;white-space:pre;-webkit-text-stroke:0.4px #262626;left:134.5px;">Documents</div><svg style="position:absolute;left:93.90px;top:373.90px" width="28.20" height="28.20"><use href="#i-finder"/></svg><div style="position:absolute;top:369.5px;height:38px;line-height:38px;font-size:22px;font-weight:400;color:#262626;letter-spacing:0.406px;white-space:pre;-webkit-text-stroke:0.4px #262626;left:134.5px;">Files &amp; Folders</div><svg style="position:absolute;left:94.20px;top:412.20px" width="27.60" height="27.60"><use href="#i-globe"/></svg><div style="position:absolute;top:407.5px;height:38px;line-height:38px;font-size:22px;font-weight:400;color:#262626;letter-spacing:0.799px;white-space:pre;-webkit-text-stroke:0.4px #262626;left:134.5px;">Internet</div><svg style="position:absolute;left:93.90px;top:449.90px" width="28.20" height="28.20"><use href="#i-mail"/></svg><div style="position:absolute;top:445.5px;height:38px;line-height:38px;font-size:22px;font-weight:400;color:#262626;letter-spacing:0.019px;white-space:pre;-webkit-text-stroke:0.4px #262626;left:134.5px;">Mail</div><svg style="position:absolute;left:93.90px;top:487.90px" width="28.20" height="28.20"><use href="#i-qt"/></svg><div style="position:absolute;top:483.5px;height:38px;line-height:38px;font-size:22px;font-weight:400;color:#262626;letter-spacing:0.382px;white-space:pre;-webkit-text-stroke:0.4px #262626;left:134.5px;">Movies</div><svg style="position:absolute;left:93.90px;top:525.90px" width="28.20" height="28.20"><use href="#i-music"/></svg><div style="position:absolute;top:521.5px;height:38px;line-height:38px;font-size:22px;font-weight:400;color:#262626;letter-spacing:0.637px;white-space:pre;-webkit-text-stroke:0.4px #262626;left:134.5px;">Music</div><svg style="position:absolute;left:95.50px;top:563.94px" width="25.00" height="28.12"><use href="#i-pdf"/></svg><div style="position:absolute;top:559.5px;height:38px;line-height:38px;font-size:22px;font-weight:400;color:#262626;letter-spacing:-1.0px;white-space:pre;-webkit-text-stroke:0.4px #262626;left:134.5px;">PDFs</div><svg style="position:absolute;left:93.80px;top:601.80px" width="28.40" height="28.40"><use href="#i-preview"/></svg><div style="position:absolute;top:597.5px;height:38px;line-height:38px;font-size:22px;font-weight:400;color:#262626;letter-spacing:0.46px;white-space:pre;-webkit-text-stroke:0.4px #262626;left:134.5px;">Photos</div><svg style="position:absolute;left:93.90px;top:639.90px" width="28.20" height="28.20"><use href="#i-keynote"/></svg><div style="position:absolute;top:635.5px;height:38px;line-height:38px;font-size:22px;font-weight:400;color:#262626;letter-spacing:0.614px;white-space:pre;-webkit-text-stroke:0.4px #262626;left:134.5px;">Presentations</div><svg style="position:absolute;left:93.70px;top:677.13px" width="28.60" height="29.74"><use href="#i-textedit"/></svg><div style="position:absolute;top:673.5px;height:38px;line-height:38px;font-size:22px;font-weight:400;color:#262626;letter-spacing:0.414px;white-space:pre;-webkit-text-stroke:0.4px #262626;left:134.5px;">Text</div><svg style="position:absolute;left:93.50px;top:715.50px" width="29.00" height="29.00"><use href="#i-tools"/></svg><div style="position:absolute;top:711.5px;height:38px;line-height:38px;font-size:22px;font-weight:400;color:#262626;letter-spacing:0.737px;white-space:pre;-webkit-text-stroke:0.4px #262626;left:134.5px;">Utilities</div><svg style="position:absolute;left:68.00px;top:754.78px" width="28.40" height="26.44"><use href="#i-pfolder"/></svg><div style="position:absolute;top:749.5px;height:38px;line-height:38px;font-size:22px;font-weight:400;color:#262626;letter-spacing:0.668px;white-space:pre;-webkit-text-stroke:0.4px #262626;left:108.5px;">Most Used</div><svg style="position:absolute;left:68.00px;top:792.78px" width="28.40" height="26.44"><use href="#i-pfolder"/></svg><div style="position:absolute;top:787.5px;height:38px;line-height:38px;font-size:22px;font-weight:400;color:#262626;letter-spacing:0.669px;white-space:pre;-webkit-text-stroke:0.4px #262626;left:108.5px;">Recently Added</div><div style="position:absolute;left:730px;top:180px;width:400px;height:38px;border-radius:8px;background:#dcdcdc"></div><div style="position:absolute;left:709.6px;top:160.5px;width:441px;height:1073.1px;overflow:hidden"><svg style="position:absolute;left:40.30px;top:23.40px" width="28.20" height="28.20"><use href="#i-mail"/></svg><div style="position:absolute;top:19.0px;height:38px;line-height:38px;font-size:22px;font-weight:400;color:#262626;letter-spacing:0.727px;white-space:pre;-webkit-text-stroke:0.4px #262626;left:81.39999999999998px;">Add Attachme<span style="letter-spacing:-0.1px">..</span><span style="letter-spacing:0.727px">.</span>Front Message</div><svg style="position:absolute;left:39.90px;top:61.00px" width="29.00" height="29.00"><use href="#i-tools"/></svg><div style="position:absolute;top:57.0px;height:38px;line-height:38px;font-size:22px;font-weight:400;color:#262626;letter-spacing:0.768px;white-space:pre;-webkit-text-stroke:0.4px #262626;left:81.39999999999998px;">Add Attachme<span style="letter-spacing:-0.1px">..</span><span style="letter-spacing:0.768px">.</span>look Messages</div><svg style="position:absolute;left:38.40px;top:97.50px" width="32.00" height="32.00"><use href="#i-word"/></svg><div style="position:absolute;top:95.0px;height:38px;line-height:38px;font-size:22px;font-weight:400;color:#262626;letter-spacing:0.799px;white-space:pre;-webkit-text-stroke:0.4px #262626;left:81.39999999999998px;">Add Content t<span style="letter-spacing:-0.1px">..</span><span style="letter-spacing:0.799px">.</span>rd Documents</div><svg style="position:absolute;left:38.40px;top:135.50px" width="32.00" height="32.00"><use href="#i-word"/></svg><div style="position:absolute;top:133.0px;height:38px;line-height:38px;font-size:22px;font-weight:400;color:#262626;letter-spacing:0.723px;white-space:pre;-webkit-text-stroke:0.4px #262626;left:81.39999999999998px;">Add Documen<span style="letter-spacing:-0.1px">..</span><span style="letter-spacing:0.723px">.</span>rd Documents</div><svg style="position:absolute;left:40.20px;top:175.30px" width="28.40" height="28.40"><use href="#i-preview"/></svg><div style="position:absolute;top:171.0px;height:38px;line-height:38px;font-size:22px;font-weight:400;color:#262626;letter-spacing:0.588px;white-space:pre;-webkit-text-stroke:0.4px #262626;left:81.39999999999998px;">Add Grid to PDF Documents</div><svg style="position:absolute;left:38.40px;top:211.50px" width="32.00" height="32.00"><use href="#i-excel"/></svg><div style="position:absolute;top:209.0px;height:38px;line-height:38px;font-size:22px;font-weight:400;color:#262626;letter-spacing:0.7px;white-space:pre;-webkit-text-stroke:0.4px #262626;left:81.39999999999998px;">Add New Sheet to Workbooks</div><svg style="position:absolute;left:40.30px;top:251.40px" width="28.20" height="28.20"><use href="#i-music"/></svg><div style="position:absolute;top:247.0px;height:38px;line-height:38px;font-size:22px;font-weight:400;color:#262626;letter-spacing:0.635px;white-space:pre;-webkit-text-stroke:0.4px #262626;left:81.39999999999998px;">Add Songs to Playlist</div><svg style="position:absolute;left:38.40px;top:287.50px" width="32.00" height="32.00"><use href="#i-word"/></svg><div style="position:absolute;top:285.0px;height:38px;line-height:38px;font-size:22px;font-weight:400;color:#262626;letter-spacing:0.773px;white-space:pre;-webkit-text-stroke:0.4px #262626;left:81.39999999999998px;">Add Table of<span style="letter-spacing:-0.1px">..</span><span style="letter-spacing:0.773px">.</span>ord Documents</div><svg style="position:absolute;left:40.20px;top:327.30px" width="28.40" height="28.40"><use href="#i-photos"/></svg><div style="position:absolute;top:323.0px;height:38px;line-height:38px;font-size:22px;font-weight:400;color:#262626;letter-spacing:0.875px;white-space:pre;-webkit-text-stroke:0.4px #262626;left:81.39999999999998px;">Add to Album</div><svg style="position:absolute;left:38.40px;top:363.50px" width="32.00" height="32.00"><use href="#i-word"/></svg><div style="position:absolute;top:361.0px;height:38px;line-height:38px;font-size:22px;font-weight:400;color:#262626;letter-spacing:0.788px;white-space:pre;-webkit-text-stroke:0.4px #262626;left:81.39999999999998px;">Add Watermar<span style="letter-spacing:-0.1px">..</span><span style="letter-spacing:0.788px">.</span>rd Documents</div><svg style="position:absolute;left:41.20px;top:404.30px" width="26.40" height="26.40"><use href="#i-term"/></svg><div style="position:absolute;top:399.0px;height:38px;line-height:38px;font-size:22px;font-weight:400;color:#262626;letter-spacing:0.73px;white-space:pre;-webkit-text-stroke:0.4px #262626;left:81.39999999999998px;">Apple Versioning Tool</div><svg style="position:absolute;left:38.40px;top:439.50px" width="32.00" height="32.00"><use href="#i-ppt"/></svg><div style="position:absolute;top:437.0px;height:38px;line-height:38px;font-size:22px;font-weight:400;color:#262626;letter-spacing:0.711px;white-space:pre;-webkit-text-stroke:0.4px #262626;left:81.39999999999998px;">Apply Animati<span style="letter-spacing:-0.1px">..</span><span style="letter-spacing:0.711px">.</span>oint Slide Parts</div><svg style="position:absolute;left:40.20px;top:479.30px" width="28.40" height="28.40"><use href="#i-preview"/></svg><div style="position:absolute;top:475.0px;height:38px;line-height:38px;font-size:22px;font-weight:400;color:#262626;letter-spacing:0.753px;white-space:pre;-webkit-text-stroke:0.4px #262626;left:81.39999999999998px;">Apply ColorSy<span style="letter-spacing:-0.1px">..</span><span style="letter-spacing:0.753px">.</span>ofile to Images</div><svg style="position:absolute;left:38.40px;top:515.50px" width="32.00" height="32.00"><use href="#i-word"/></svg><div style="position:absolute;top:513.0px;height:38px;line-height:38px;font-size:22px;font-weight:400;color:#262626;letter-spacing:0.681px;white-space:pre;-webkit-text-stroke:0.4px #262626;left:81.39999999999998px;">Apply Font Fo<span style="letter-spacing:-0.1px">..</span><span style="letter-spacing:0.681px">.</span>ord Documents</div><svg style="position:absolute;left:39.90px;top:555.00px" width="29.00" height="29.00"><use href="#i-tools"/></svg><div style="position:absolute;top:551.0px;height:38px;line-height:38px;font-size:22px;font-weight:400;color:#262626;letter-spacing:0.637px;white-space:pre;-webkit-text-stroke:0.4px #262626;left:81.39999999999998px;">Apply Quartz<span style="letter-spacing:-0.1px">..</span><span style="letter-spacing:0.637px">.</span>r to Image Files</div><svg style="position:absolute;left:39.90px;top:593.00px" width="29.00" height="29.00"><use href="#i-tools"/></svg><div style="position:absolute;top:589.0px;height:38px;line-height:38px;font-size:22px;font-weight:400;color:#262626;letter-spacing:0.609px;white-space:pre;-webkit-text-stroke:0.4px #262626;left:81.39999999999998px;">Apply Quartz<span style="letter-spacing:-0.1px">..</span><span style="letter-spacing:0.609px">.</span>PDF Documents</div><svg style="position:absolute;left:39.90px;top:631.00px" width="29.00" height="29.00"><use href="#i-tools"/></svg><div style="position:absolute;top:627.0px;height:38px;line-height:38px;font-size:22px;font-weight:400;color:#262626;letter-spacing:0.316px;white-space:pre;-webkit-text-stroke:0.4px #262626;left:81.39999999999998px;">Apply SQL</div><svg style="position:absolute;left:40.20px;top:669.30px" width="28.40" height="28.40"><use href="#i-auto"/></svg><div style="position:absolute;top:665.0px;height:38px;line-height:38px;font-size:22px;font-weight:400;color:#262626;letter-spacing:0.795px;white-space:pre;-webkit-text-stroke:0.4px #262626;left:81.39999999999998px;">Ask for Confirmation</div><svg style="position:absolute;left:40.30px;top:707.40px" width="28.20" height="28.20"><use href="#i-finder"/></svg><div style="position:absolute;top:703.0px;height:38px;line-height:38px;font-size:22px;font-weight:400;color:#262626;letter-spacing:0.619px;white-space:pre;-webkit-text-stroke:0.4px #262626;left:81.39999999999998px;">Ask for Finder Items</div><svg style="position:absolute;left:40.30px;top:745.40px" width="28.20" height="28.20"><use href="#i-qt"/></svg><div style="position:absolute;top:741.0px;height:38px;line-height:38px;font-size:22px;font-weight:400;color:#262626;letter-spacing:0.626px;white-space:pre;-webkit-text-stroke:0.4px #262626;left:81.39999999999998px;">Ask for Movies</div><svg style="position:absolute;left:40.20px;top:783.30px" width="28.40" height="28.40"><use href="#i-photos"/></svg><div style="position:absolute;top:779.0px;height:38px;line-height:38px;font-size:22px;font-weight:400;color:#262626;letter-spacing:0.64px;white-space:pre;-webkit-text-stroke:0.4px #262626;left:81.39999999999998px;">Ask for Photos</div><svg style="position:absolute;left:40.60px;top:821.70px" width="27.60" height="27.60"><use href="#i-globe"/></svg><div style="position:absolute;top:817.0px;height:38px;line-height:38px;font-size:22px;font-weight:400;color:#262626;letter-spacing:0.443px;white-space:pre;-webkit-text-stroke:0.4px #262626;left:81.39999999999998px;">Ask For Servers</div><svg style="position:absolute;left:40.30px;top:859.40px" width="28.20" height="28.20"><use href="#i-music"/></svg><div style="position:absolute;top:855.0px;height:38px;line-height:38px;font-size:22px;font-weight:400;color:#262626;letter-spacing:0.596px;white-space:pre;-webkit-text-stroke:0.4px #262626;left:81.39999999999998px;">Ask for Songs</div><svg style="position:absolute;left:40.10px;top:896.63px" width="28.60" height="29.74"><use href="#i-textedit"/></svg><div style="position:absolute;top:893.0px;height:38px;line-height:38px;font-size:22px;font-weight:400;color:#262626;letter-spacing:0.752px;white-space:pre;-webkit-text-stroke:0.4px #262626;left:81.39999999999998px;">Ask for Text</div><svg style="position:absolute;left:38.40px;top:933.50px" width="32.00" height="32.00"><use href="#i-excel"/></svg><div style="position:absolute;top:931.0px;height:38px;line-height:38px;font-size:22px;font-weight:400;color:#262626;letter-spacing:0.694px;white-space:pre;-webkit-text-stroke:0.4px #262626;left:81.39999999999998px;">AutoFormat D<span style="letter-spacing:-0.1px">..</span><span style="letter-spacing:0.694px">.</span>cel Workbooks</div><svg style="position:absolute;left:38.40px;top:971.50px" width="32.00" height="32.00"><use href="#i-word"/></svg><div style="position:absolute;top:969.0px;height:38px;line-height:38px;font-size:22px;font-weight:400;color:#262626;letter-spacing:0.671px;white-space:pre;-webkit-text-stroke:0.4px #262626;left:81.39999999999998px;">Bring Word Do<span style="letter-spacing:-0.1px">..</span><span style="letter-spacing:0.671px">.</span>ments to Front</div><svg style="position:absolute;left:40.50px;top:1011.60px" width="27.80" height="27.80"><use href="#i-burn"/></svg><div style="position:absolute;top:1007.0px;height:38px;line-height:38px;font-size:22px;font-weight:400;color:#262626;letter-spacing:0.438px;white-space:pre;-webkit-text-stroke:0.4px #262626;left:81.39999999999998px;">Burn a Disc</div><svg style="position:absolute;left:40.30px;top:1049.40px" width="28.20" height="28.20"><use href="#i-sys"/></svg><div style="position:absolute;top:1045.0px;height:38px;line-height:38px;font-size:22px;font-weight:400;color:#262626;letter-spacing:0.627px;white-space:pre;-webkit-text-stroke:0.4px #262626;left:81.39999999999998px;">Change System Appearance</div></div><div style="position:absolute;left:0px;top:1233.6px;width:1180px;height:2px;background:#cdcdcd"></div><div style="position:absolute;left:0px;top:1235.6px;width:1180px;height:419px;background:#fff"></div><svg style="position:absolute;left:39.5px;top:1257.8px" width="53.2" height="53.2"><use href="#i-mail"/></svg><div style="position:absolute;top:1258.6px;height:52px;line-height:52px;font-size:36px;font-weight:700;color:#262626;letter-spacing:0px;white-space:pre;left:118.5px;">Add Attachments to Front Message</div><div style="position:absolute;top:1327.8px;height:38px;line-height:38px;font-size:22px;font-weight:400;color:#262626;letter-spacing:0.715px;white-space:pre;-webkit-text-stroke:0.4px #262626;left:34.5px;">This action attaches files to a Mail message.</div><div style="position:absolute;top:1372px;height:38px;line-height:38px;font-size:22px;font-weight:700;color:#262626;letter-spacing:0.389px;white-space:pre;right:2135.611px;text-align:right;">Requires:</div><div style="position:absolute;top:1372px;height:38px;line-height:38px;font-size:22px;font-weight:400;color:#262626;letter-spacing:0.735px;white-space:pre;-webkit-text-stroke:0.4px #262626;left:231.5px;">The Mail application must be running and there must be an outgoing message.</div><div style="position:absolute;top:1404px;height:38px;line-height:38px;font-size:22px;font-weight:700;color:#262626;letter-spacing:0.781px;white-space:pre;right:2135.219px;text-align:right;">Input:</div><div style="position:absolute;top:1404px;height:38px;line-height:38px;font-size:22px;font-weight:400;color:#262626;letter-spacing:0.744px;white-space:pre;-webkit-text-stroke:0.4px #262626;left:231.5px;">(Files/Folders) The files to be attached are passed in from the previous action.</div><div style="position:absolute;top:1436px;height:38px;line-height:38px;font-size:22px;font-weight:700;color:#262626;letter-spacing:0.323px;white-space:pre;right:2135.677px;text-align:right;">Result:</div><div style="position:absolute;top:1436px;height:38px;line-height:38px;font-size:22px;font-weight:400;color:#262626;letter-spacing:0.523px;white-space:pre;-webkit-text-stroke:0.4px #262626;left:231.5px;">Mail messages</div><div style="position:absolute;top:1468px;height:38px;line-height:38px;font-size:22px;font-weight:700;color:#262626;letter-spacing:0.455px;white-space:pre;right:2135.545px;text-align:right;">Version:</div><div style="position:absolute;top:1468px;height:38px;line-height:38px;font-size:22px;font-weight:400;color:#262626;letter-spacing:-1.0px;white-space:pre;-webkit-text-stroke:0.4px #262626;left:231.5px;">1.1.1</div><div style="position:absolute;top:1500px;height:38px;line-height:38px;font-size:22px;font-weight:700;color:#262626;letter-spacing:0.644px;white-space:pre;right:2135.3559999999998px;text-align:right;">Copyright:</div><div style="position:absolute;top:1500px;height:38px;line-height:38px;font-size:22px;font-weight:400;color:#262626;letter-spacing:0.882px;white-space:pre;-webkit-text-stroke:0.4px #262626;left:231.5px;">Copyright © 2004–2012 Apple Inc.  All rights reserved.</div><div style="position:absolute;left:0px;top:1654px;width:1180px;height:1.5px;background:#d2d2d2"></div><div style="position:absolute;left:0px;top:1655.5px;width:1180px;height:45px;background:#f6f6f6"></div><svg style="position:absolute;left:17px;top:1663px" width="24" height="24" viewBox="0 0 24 24"><circle cx="12" cy="12" r="10" fill="none" stroke="#3a3a3a" stroke-width="1.5"/><circle cx="7.4" cy="12" r="1.5" fill="#3a3a3a"/><circle cx="12" cy="12" r="1.5" fill="#3a3a3a"/><circle cx="16.6" cy="12" r="1.5" fill="#3a3a3a"/></svg><svg style="position:absolute;left:46px;top:1667px" width="18" height="16" viewBox="0 0 18 16"><path d="M3 5.4 L9 11.2 L15 5.4" fill="none" stroke="#3a3a3a" stroke-width="2.6" stroke-linecap="round" stroke-linejoin="round"/></svg><svg style="position:absolute;left:95px;top:1664px" width="22" height="22" viewBox="0 0 22 22"><rect x="1.6" y="1.6" width="18.8" height="18.8" rx="3" fill="none" stroke="#2f6ae6" stroke-width="1.8"/><path d="M6 8.6 L11 14 L16 8.6" fill="none" stroke="#2f6ae6" stroke-width="1.6" stroke-linecap="round" stroke-linejoin="round"/></svg><div style="position:absolute;left:1182px;top:105.5px;width:1180px;height:1192px;background:#e3e3e3"></div><div style="position:absolute;left:1197.5px;top:128px;width:1144.5px;height:266.8px;background:#fff;box-shadow:0 0 0 1px #d3d3d3"></div><svg style="position:absolute;left:1210px;top:145.5px" width="20" height="14" viewBox="0 0 20 14"><path d="M3.2 3.2 L10 10.2 L16.8 3.2" fill="none" stroke="#b4b4b4" stroke-width="2.6" stroke-linecap="round" stroke-linejoin="round"/></svg><svg style="position:absolute;left:1246.10px;top:138.10px" width="28.20" height="28.20"><use href="#i-finder"/></svg><div style="position:absolute;top:132.6px;height:40px;line-height:40px;font-size:26px;font-weight:700;color:#222;letter-spacing:0.405px;white-space:pre;left:1291px;">Ask for Finder Items</div><svg style="position:absolute;left:2308px;top:144px" width="16" height="16" viewBox="0 0 16 16"><path d="M2.6 2.6 L13.4 13.4 M13.4 2.6 L2.6 13.4" stroke="#585858" stroke-width="2.6" stroke-linecap="round"/></svg><div style="position:absolute;left:1214px;top:175.5px;width:1112px;height:1.6px;background:#dedede"></div><div style="position:absolute;top:198px;height:38px;line-height:38px;font-size:22px;font-weight:400;color:#262626;letter-spacing:0.861px;white-space:pre;-webkit-text-stroke:0.4px #262626;right:1049.639px;text-align:right;">Prompt:</div><div style="position:absolute;left:1328.5px;top:199px;width:419px;height:33.8px;background:#fff;box-sizing:border-box;border:1px solid #e9e9e9;border-bottom:1.5px solid #c2c2c2"></div><div style="position:absolute;top:198px;height:38px;line-height:38px;font-size:22px;font-weight:400;color:#262626;letter-spacing:0.536px;white-space:pre;-webkit-text-stroke:0.4px #262626;left:1335.8px;">Choose a Finder Item:</div><div style="position:absolute;top:246.8px;height:38px;line-height:38px;font-size:22px;font-weight:400;color:#262626;letter-spacing:0.769px;white-space:pre;-webkit-text-stroke:0.4px #262626;right:1049.731px;text-align:right;">Start at:</div><div style="position:absolute;left:1327px;top:249.6px;width:290px;height:32px;border-radius:7px;background:#fff;box-shadow:0 0.6px 1.8px rgba(0,0,0,.28),0 0 0 0.6px rgba(0,0,0,.07)"></div><svg style="position:absolute;left:1339.7px;top:252.1px" width="29.7" height="28"><use href="#i-desktop"/></svg><div style="position:absolute;top:249.6px;height:32px;line-height:32px;font-size:22px;font-weight:400;color:#262626;letter-spacing:0.764px;white-space:pre;-webkit-text-stroke:0.4px #262626;left:1380px;">Desktop</div><div style="position:absolute;left:1589px;top:253.6px;width:24px;height:24px;border-radius:6px;background:linear-gradient(#5495fa,#2a6cf0)"></div><svg style="position:absolute;left:1589px;top:253.6px" width="24" height="24" viewBox="0 0 24 24"><path d="M8 9.6 L12 5.6 L16 9.6 M8 14.4 L12 18.4 L16 14.4" fill="none" stroke="#fff" stroke-width="2" stroke-linecap="round" stroke-linejoin="round"/></svg><div style="position:absolute;top:295px;height:38px;line-height:38px;font-size:22px;font-weight:400;color:#262626;letter-spacing:0.597px;white-space:pre;-webkit-text-stroke:0.4px #262626;right:1049.903px;text-align:right;">Type:</div><div style="position:absolute;left:1327px;top:297.8px;width:290px;height:32px;border-radius:7px;background:#fff;box-shadow:0 0.6px 1.8px rgba(0,0,0,.28),0 0 0 0.6px rgba(0,0,0,.07)"></div><div style="position:absolute;top:297.8px;height:32px;line-height:32px;font-size:22px;font-weight:400;color:#262626;letter-spacing:0.523px;white-space:pre;-webkit-text-stroke:0.4px #262626;left:1339.5px;">Folders</div><div style="position:absolute;left:1589px;top:301.8px;width:24px;height:24px;border-radius:6px;background:linear-gradient(#5495fa,#2a6cf0)"></div><svg style="position:absolute;left:1589px;top:301.8px" width="24" height="24" viewBox="0 0 24 24"><path d="M8 9.6 L12 5.6 L16 9.6 M8 14.4 L12 18.4 L16 14.4" fill="none" stroke="#fff" stroke-width="2" stroke-linecap="round" stroke-linejoin="round"/></svg><div style="position:absolute;left:1633px;top:302.3px;width:23.6px;height:23.2px;border-radius:5.5px;background:#fff;box-shadow:inset 0 0 0 1px #c6c6c6, inset 0 1px 1.5px rgba(0,0,0,.12)"></div><div style="position:absolute;top:295px;height:38px;line-height:38px;font-size:22px;font-weight:400;color:#262626;letter-spacing:0.743px;white-space:pre;-webkit-text-stroke:0.4px #262626;left:1666px;">Allow Multiple Selection</div><div style="position:absolute;left:1214px;top:347px;width:1112px;height:1.6px;background:#dedede"></div><div style="position:absolute;top:353.5px;height:38px;line-height:38px;font-size:22px;font-weight:700;color:#7f7f7f;letter-spacing:0.453px;white-space:pre;left:1260.5px;">Results</div><div style="position:absolute;top:353.5px;height:38px;line-height:38px;font-size:22px;font-weight:700;color:#7f7f7f;letter-spacing:0.632px;white-space:pre;left:1376px;">Options</div><div style="position:absolute;left:1196px;top:428px;width:1148px;height:490px;background:#fff;box-sizing:border-box;border:4px solid #2860d8"></div><svg style="position:absolute;left:1730px;top:396px" width="80" height="40" viewBox="0 0 80 40"><path d="M14 36 V32 A26 26 0 0 1 66 32 V36 Z" fill="#fff"/><path d="M16 36 V32 A24 24 0 0 1 64 32 V36" fill="none" stroke="#2860d8" stroke-width="4"/><rect x="18" y="32.2" width="44" height="6" fill="#fff"/></svg><svg style="position:absolute;left:1730px;top:395px" width="80" height="40" viewBox="0 0 80 40"><path d="M16.6 -1 H63.4 V1.2 L40 21 L16.6 1.2 Z" fill="#fff"/><path d="M16 1.2 L40 21 L64 1.2" fill="none" stroke="#6c6c6c" stroke-width="0.8"/></svg><svg style="position:absolute;left:1210px;top:447.5px" width="20" height="14" viewBox="0 0 20 14"><path d="M3.2 3.2 L10 10.2 L16.8 3.2" fill="none" stroke="#b4b4b4" stroke-width="2.6" stroke-linecap="round" stroke-linejoin="round"/></svg><svg style="position:absolute;left:1246.80px;top:440.80px" width="26.40" height="26.40"><use href="#i-term"/></svg><div style="position:absolute;top:434.6px;height:40px;line-height:40px;font-size:26px;font-weight:700;color:#222;letter-spacing:0.212px;white-space:pre;left:1291.5px;">Run Shell Script</div><svg style="position:absolute;left:2308px;top:446px" width="16" height="16" viewBox="0 0 16 16"><path d="M2.6 2.6 L13.4 13.4 M13.4 2.6 L2.6 13.4" stroke="#585858" stroke-width="2.6" stroke-linecap="round"/></svg><div style="position:absolute;left:1214px;top:477px;width:1112px;height:1.6px;background:#dedede"></div><div style="position:absolute;top:497.7px;height:38px;line-height:38px;font-size:22px;font-weight:400;color:#262626;letter-spacing:0.331px;white-space:pre;-webkit-text-stroke:0.4px #262626;left:1226.5px;">Shell:</div><div style="position:absolute;left:1298px;top:499.6px;width:288px;height:32px;border-radius:7px;background:#fff;box-shadow:0 0.6px 1.8px rgba(0,0,0,.28),0 0 0 0.6px rgba(0,0,0,.07)"></div><div style="position:absolute;top:500.5px;height:32px;line-height:32px;font-size:22px;font-weight:400;color:#262626;letter-spacing:0.738px;white-space:pre;-webkit-text-stroke:0.4px #262626;left:1310.5px;">/bin/bash</div><div style="position:absolute;left:1558px;top:503.6px;width:24px;height:24px;border-radius:6px;background:linear-gradient(#5495fa,#2a6cf0)"></div><svg style="position:absolute;left:1558px;top:503.6px" width="24" height="24" viewBox="0 0 24 24"><path d="M8 9.6 L12 5.6 L16 9.6 M8 14.4 L12 18.4 L16 14.4" fill="none" stroke="#fff" stroke-width="2" stroke-linecap="round" stroke-linejoin="round"/></svg><div style="position:absolute;top:497.7px;height:38px;line-height:38px;font-size:22px;font-weight:400;color:#262626;letter-spacing:0.516px;white-space:pre;-webkit-text-stroke:0.4px #262626;left:1936.5px;">Pass input:</div><div style="position:absolute;left:2066px;top:499.6px;width:248px;height:32px;border-radius:7px;background:#fff;box-shadow:0 0.6px 1.8px rgba(0,0,0,.28),0 0 0 0.6px rgba(0,0,0,.07)"></div><div style="position:absolute;top:500.5px;height:32px;line-height:32px;font-size:22px;font-weight:400;color:#262626;letter-spacing:0.655px;white-space:pre;-webkit-text-stroke:0.4px #262626;left:2078.5px;">as arguments</div><div style="position:absolute;left:2286px;top:503.6px;width:24px;height:24px;border-radius:6px;background:linear-gradient(#5495fa,#2a6cf0)"></div><svg style="position:absolute;left:2286px;top:503.6px" width="24" height="24" viewBox="0 0 24 24"><path d="M8 9.6 L12 5.6 L16 9.6 M8 14.4 L12 18.4 L16 14.4" fill="none" stroke="#fff" stroke-width="2" stroke-linecap="round" stroke-linejoin="round"/></svg><div style="position:absolute;left:1226.5px;top:546.5px;width:1088px;height:301px;background:#fff;box-sizing:border-box;border:2px solid #e0e0e0"></div><div style="position:absolute;left:2291px;top:548px;width:22px;height:298px;background:#fafafa;border-left:1px solid #e6e6e6;box-sizing:border-box"></div><div style="position:absolute;left:1238.5px;top:550.50px;height:28px;line-height:28px;font-family:'Liberation Mono',monospace;font-size:22.2px;letter-spacing:1.075px;color:#000;white-space:pre;-webkit-text-stroke:0.45px #000">#1/bin/bash</div><div style="position:absolute;left:1238.5px;top:578.60px;height:28px;line-height:28px;font-family:'Liberation Mono',monospace;font-size:22.2px;letter-spacing:1.075px;color:#000;white-space:pre;-webkit-text-stroke:0.45px #000"></div><div style="position:absolute;left:1238.5px;top:606.70px;height:28px;line-height:28px;font-family:'Liberation Mono',monospace;font-size:22.2px;letter-spacing:1.075px;color:#000;white-space:pre;-webkit-text-stroke:0.45px #000">for f in $(ls -1 $@/*. {jpg, jpeg} )</div><div style="position:absolute;left:1238.5px;top:634.80px;height:28px;line-height:28px;font-family:'Liberation Mono',monospace;font-size:22.2px;letter-spacing:1.075px;color:#000;white-space:pre;-webkit-text-stroke:0.45px #000">do</div><div style="position:absolute;left:1238.5px;top:662.90px;height:28px;line-height:28px;font-family:'Liberation Mono',monospace;font-size:22.2px;letter-spacing:1.075px;color:#000;white-space:pre;-webkit-text-stroke:0.45px #000">/usr/bin/sips -1 -s format pdf &quot;${f}&quot; -o &quot;${f%.*}&quot;&quot;.pdf&quot;</div><div style="position:absolute;left:1238.5px;top:691.00px;height:28px;line-height:28px;font-family:'Liberation Mono',monospace;font-size:22.2px;letter-spacing:1.075px;color:#000;white-space:pre;-webkit-text-stroke:0.45px #000">done</div><div style="position:absolute;left:1238.5px;top:719.10px;height:28px;line-height:28px;font-family:'Liberation Mono',monospace;font-size:22.2px;letter-spacing:1.075px;color:#000;white-space:pre;-webkit-text-stroke:0.45px #000">exit 0</div><div style="position:absolute;left:1214px;top:867px;width:1112px;height:1.6px;background:#dedede"></div><div style="position:absolute;top:873.5px;height:38px;line-height:38px;font-size:22px;font-weight:700;color:#7f7f7f;letter-spacing:0.453px;white-space:pre;left:1260.5px;">Results</div><div style="position:absolute;top:873.5px;height:38px;line-height:38px;font-size:22px;font-weight:700;color:#7f7f7f;letter-spacing:0.632px;white-space:pre;left:1376px;">Options</div><div style="position:absolute;left:1181.4px;top:1296.5px;width:1180px;height:1.6px;background:#c9c9c9"></div><div style="position:absolute;left:1181.4px;top:1298px;width:1180px;height:357px;background:#fff"></div><div style="position:absolute;top:1307.7px;height:38px;line-height:38px;font-size:22px;font-weight:400;color:#262626;letter-spacing:0.391px;white-space:pre;-webkit-text-stroke:0.4px #262626;left:1240.5px;">Log</div><div style="position:absolute;top:1307.7px;height:38px;line-height:38px;font-size:22px;font-weight:400;color:#262626;letter-spacing:0.749px;white-space:pre;-webkit-text-stroke:0.4px #262626;left:2140.5px;">Duration</div><div style="position:absolute;left:2128.5px;top:1311px;width:1.4px;height:30px;background:#dcdcdc"></div><div style="position:absolute;left:2336.5px;top:1311px;width:1.4px;height:30px;background:#dcdcdc"></div><div style="position:absolute;left:1181.4px;top:1352.3px;width:1180px;height:1.5px;background:#e2e2e2"></div><div style="position:absolute;left:1202px;top:1402px;width:1136px;height:38px;border-radius:9px;background:#f4f5f5"></div><div style="position:absolute;left:1202px;top:1478px;width:1136px;height:38px;border-radius:9px;background:#f4f5f5"></div><div style="position:absolute;left:1202px;top:1554px;width:1136px;height:38px;border-radius:9px;background:#f4f5f5"></div><div style="position:absolute;left:1202px;top:1630px;width:1136px;height:38px;border-radius:9px;background:#f4f5f5"></div><div style="position:absolute;left:2128.5px;top:1354px;width:1.2px;height:300px;background:#e4e4e4"></div><div style="position:absolute;left:1181.4px;top:1654px;width:1180px;height:1.5px;background:#d2d2d2"></div><div style="position:absolute;left:1181.4px;top:1655.5px;width:1180px;height:45px;background:#f5f5f5"></div><svg style="position:absolute;left:1201px;top:1663px" width="28" height="24" viewBox="0 0 28 24"><g stroke="#2f6ae6" stroke-width="2.1" stroke-linecap="round"><path d="M2.2 4 H2.6 M8.6 4 H25.6 M2.2 12 H2.6 M8.6 12 H25.6 M2.2 20 H2.6 M8.6 20 H25.6"/></g></svg><svg style="position:absolute;left:1265px;top:1662px" width="30" height="26" viewBox="0 0 30 26"><rect x="1.6" y="1.8" width="26.4" height="9" rx="2.2" fill="none" stroke="#5a5a5a" stroke-width="1.8"/><rect x="1.6" y="14.6" width="26.4" height="9" rx="2.2" fill="none" stroke="#5a5a5a" stroke-width="1.8"/></svg></div>
</body></html>
